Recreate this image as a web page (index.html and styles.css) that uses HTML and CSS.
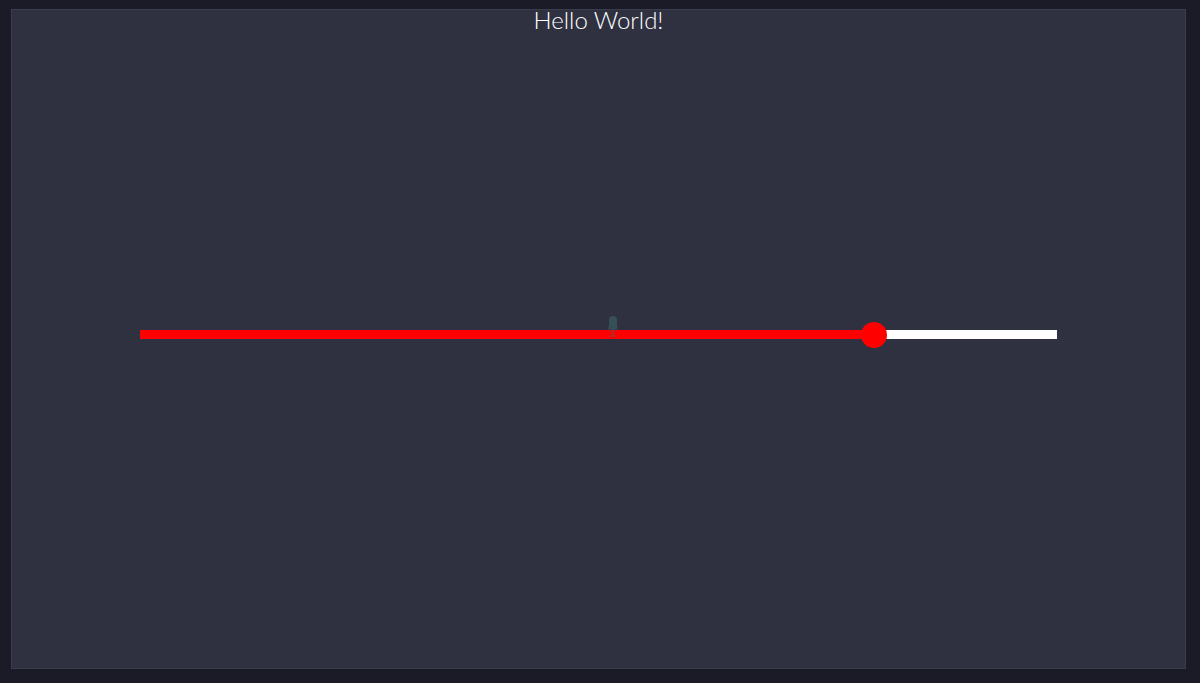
FILE: index.html
```html
<!DOCTYPE html>
<html lang="en">
<head>
    <meta charset="UTF-8">
    <title>Slider</title>
    <link rel="stylesheet" href="styles.css">
</head>
<body>

<div class="panel">
    <h1 class="title">Hello World!</h1>

    <div class="stage">
        <div class="slider">
            <div class="fill" style="width: 80%"></div>
            <div class="thumb" style="left: 80%"></div>

            <!-- voice input hint, barely visible over the track -->
            <svg class="mic" width="10" height="22" viewBox="0 0 10 22">
                <rect x="1" y="0" width="8" height="14" rx="4" fill="#3f6a6a"/>
                <path d="M0.5 11 a4.5 4.5 0 0 0 9 0" stroke="#3f6a6a" stroke-width="1.2" fill="none"/>
                <rect x="4.4" y="15.5" width="1.2" height="4" fill="#3f6a6a"/>
                <rect x="2" y="19.5" width="6" height="1.2" fill="#3f6a6a"/>
            </svg>
        </div>
    </div>
</div>

</body>
</html>
```

FILE: styles.css
```css
html, body {
    height: 100%;
}
body {
    margin: 0;
    background-color: #1a1b27;
    box-sizing: border-box;
    padding: 9px 14px 14px 11px;
    font-family: Lato, "Open Sans", sans-serif;
}
.panel {
    height: 100%;
    box-sizing: border-box;
    background-color: #2f3040;
    border: 1px solid #3a3b4d;
    display: flex;
    flex-direction: column;
}
.title {
    margin: 0;
    text-align: center;
    color: #ffffff;
    font-weight: 300;
    font-size: 24px;
    line-height: 20px;
}
.stage {
    flex: 1;
    display: flex;
    justify-content: center;
    padding-top: 300px;
}
.slider {
    position: relative;
    width: 917px;
    height: 9px;
    background-color: #ffffff;
}
.fill {
    height: 100%;
    background-color: #ff0000;
}
.thumb {
    position: absolute;
    top: 50%;
    width: 26px;
    height: 26px;
    margin: -13px 0 0 -13px;
    border-radius: 50%;
    background-color: #ff0000;
}
.mic {
    position: absolute;
    left: 468px;
    top: -14px;
    opacity: 0.55;
}
```
